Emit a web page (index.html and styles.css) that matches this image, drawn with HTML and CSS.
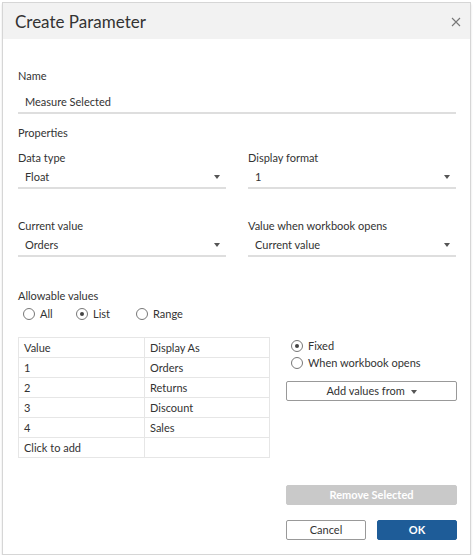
FILE: index.html
```html
<!DOCTYPE html>
<html>
<head>
<meta charset="utf-8">
<link rel="stylesheet" href="styles.css">
</head>
<body>
<div class="dialog">
  <div class="header">
    <span class="title">Create Parameter</span>
    <svg class="close" width="10" height="10" viewBox="0 0 10 10"><path d="M1 1L9 9M9 1L1 9" stroke="#777" stroke-width="1.1" fill="none"/></svg>
  </div>
  <div class="body">
    <div class="label l-name">Name</div>
    <div class="input">Measure Selected</div>
    <div class="label l-props">Properties</div>
    <div class="grid">
      <div class="field">
        <div class="label">Data type</div>
        <div class="select"><span>Float</span><i class="caret"></i></div>
      </div>
      <div class="field">
        <div class="label">Display format</div>
        <div class="select"><span>1</span><i class="caret"></i></div>
      </div>
      <div class="field f2">
        <div class="label">Current value</div>
        <div class="select"><span>Orders</span><i class="caret"></i></div>
      </div>
      <div class="field f2">
        <div class="label">Value when workbook opens</div>
        <div class="select"><span>Current value</span><i class="caret"></i></div>
      </div>
    </div>
    <div class="label l-allow">Allowable values</div>
    <div class="radios">
      <label class="radio r-all"><i class="dot"></i>All</label>
      <label class="radio r-list"><i class="dot on"></i>List</label>
      <label class="radio r-range"><i class="dot"></i>Range</label>
    </div>
    <div class="listarea">
      <table class="values">
        <tr class="head"><td>Value</td><td>Display As</td></tr>
        <tr><td>1</td><td>Orders</td></tr>
        <tr><td>2</td><td>Returns</td></tr>
        <tr><td>3</td><td>Discount</td></tr>
        <tr><td>4</td><td>Sales</td></tr>
        <tr><td>Click to add</td><td></td></tr>
      </table>
      <div class="side">
        <label class="radio"><i class="dot on"></i>Fixed</label>
        <label class="radio"><i class="dot"></i>When workbook opens</label>
        <div class="btn add">Add values from <i class="caret small"></i></div>
      </div>
    </div>
    <div class="footer">
      <div class="btn remove">Remove Selected</div>
      <div class="row">
        <div class="btn cancel">Cancel</div>
        <div class="btn ok">OK</div>
      </div>
    </div>
  </div>
</div>
</body>
</html>
```
FILE: styles.css
```css
html, body {
  margin: 0;
  padding: 0;
  background: #fff;
}
body {
  font-family: Lato, "Noto Sans", sans-serif;
  font-size: 11px;
  color: #333;
}
.dialog {
  margin: 2px 0 0 2px;
  width: 467px;
  height: 551px;
  border: 1px solid #d6d6d6;
  box-shadow: 0 2px 2px rgba(0,0,0,0.12);
  background: #fff;
  display: flex;
  flex-direction: column;
}
.header {
  height: 36px;
  background: #f2f2f2;
  display: flex;
  align-items: center;
  justify-content: space-between;
  padding: 0 9px 0 12px;
}
.title {
  font-size: 17px;
  color: #333;
  font-weight: 400;
  padding-top: 1px;
}
.close {
  margin-top: 1px;
}
.body {
  padding: 0 13px 0 15px;
  flex: 1;
  display: flex;
  flex-direction: column;
}
.label {
  line-height: 16px;
  height: 16px;
  color: #333;
}
.l-name { margin-top: 29px; }
.input {
  margin-top: 8px;
  height: 20px;
  line-height: 20px;
  padding-left: 7px;
  border-bottom: 2px solid #dedede;
  margin-right: 1px;
}
.l-props { margin-top: 11px; }
.grid {
  margin-top: 9px;
  display: grid;
  grid-template-columns: 208px 208px;
  column-gap: 22px;
}
.field.f2 { margin-top: 29px; }
.select {
  margin-top: 1px;
  height: 20px;
  line-height: 20px;
  padding: 0 6px 0 7px;
  border-bottom: 2px solid #dedede;
  display: flex;
  justify-content: space-between;
  align-items: center;
}
.caret {
  display: inline-block;
  width: 0;
  height: 0;
  border-left: 3px solid transparent;
  border-right: 3px solid transparent;
  border-top: 4px solid #555;
}
.caret.small {
  margin-left: 3px;
  vertical-align: 1px;
}
.l-allow { margin-top: 31px; }
.radios {
  margin-top: 2px;
  height: 16px;
  display: flex;
  align-items: center;
  padding-left: 5px;
}
.radio {
  display: flex;
  align-items: center;
  height: 16px;
  line-height: 16px;
}
.r-all { width: 53px; }
.r-list { width: 60px; }
.dot {
  box-sizing: border-box;
  width: 12px;
  height: 12px;
  border: 1px solid #777;
  border-radius: 50%;
  margin-right: 5px;
  display: inline-flex;
  align-items: center;
  justify-content: center;
  background: #fff;
}
.dot.on::after {
  content: "";
  width: 4px;
  height: 4px;
  border-radius: 50%;
  background: #444;
}
.listarea {
  margin-top: 15px;
  display: flex;
  gap: 16px;
}
.values {
  border-collapse: collapse;
  width: 252px;
  table-layout: fixed;
}
.values td {
  border: 1px solid #e6e6e6;
  height: 19px;
  line-height: 19px;
  padding: 0 0 0 5px;
  color: #333;
}
.values td:first-child { width: 120px; }
.side {
  width: 171px;
  padding-top: 0;
}
.side .radio {
  padding-left: 5px;
  height: 17px;
}
.btn {
  box-sizing: border-box;
  height: 20px;
  line-height: 18px;
  text-align: center;
  border-radius: 2px;
  border: 1px solid #999;
  color: #333;
}
.add {
  margin-top: 10px;
  width: 171px;
}
.footer {
  margin-top: 27px;
  margin-left: auto;
  margin-right: 0;
  width: 171px;
}
.remove {
  background: #c9c9c9;
  border-color: #c9c9c9;
  color: #fff;
  font-weight: 700;
}
.row {
  margin-top: 15px;
  display: flex;
  justify-content: space-between;
}
.cancel {
  width: 80px;
}
.ok {
  width: 80px;
  background: #1e5c98;
  border-color: #1e5c98;
  color: #fff;
  font-weight: 700;
}
```
